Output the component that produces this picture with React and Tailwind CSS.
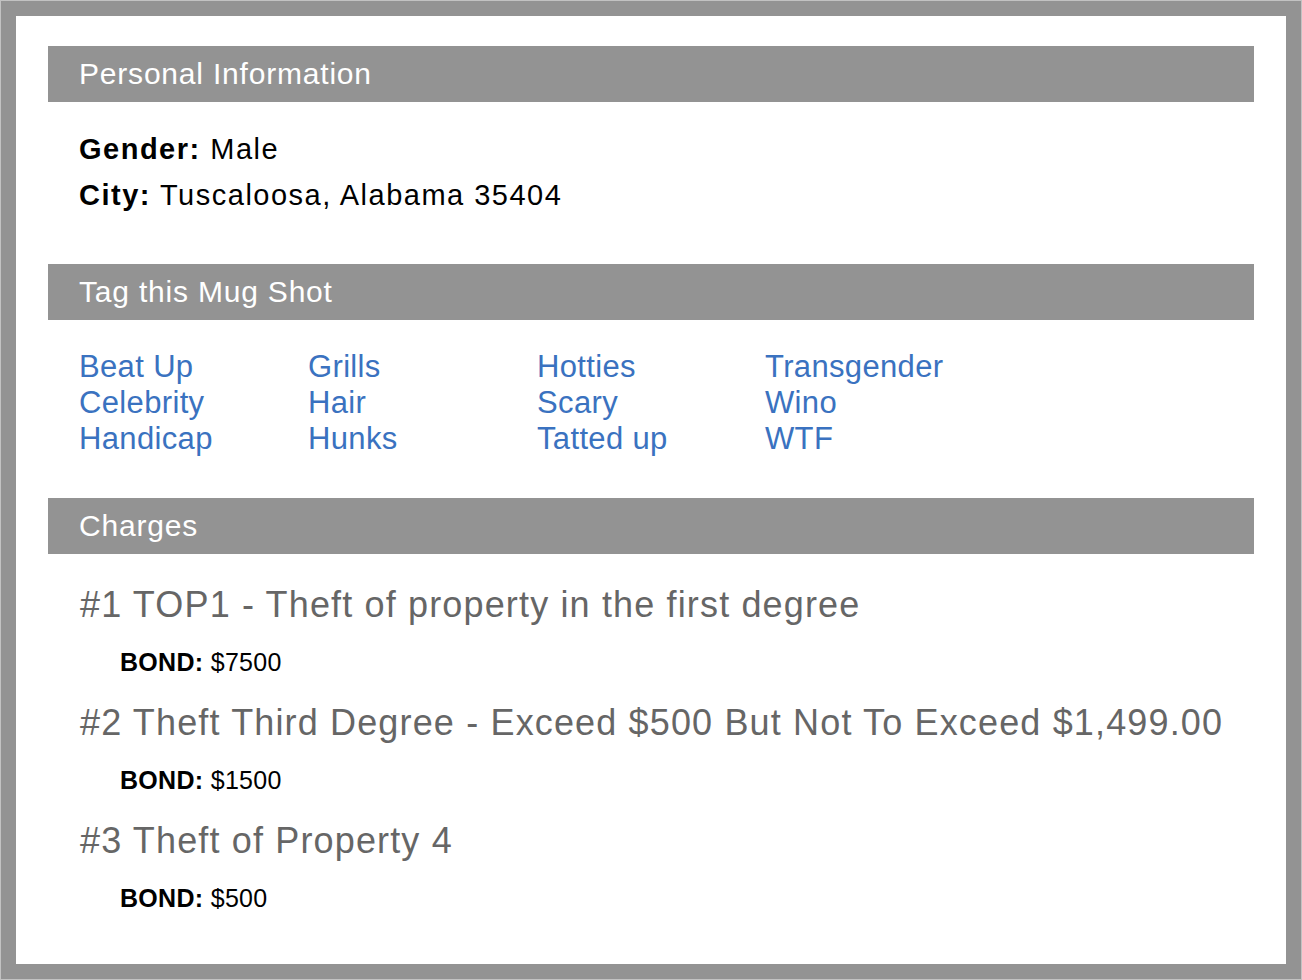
import React from "react";

const tags = [
  "Beat Up", "Celebrity", "Handicap",
  "Grills", "Hair", "Hunks",
  "Hotties", "Scary", "Tatted up",
  "Transgender", "Wino", "WTF",
];

const charges = [
  { title: "#1 TOP1 - Theft of property in the first degree", bond: "$7500" },
  { title: "#2 Theft Third Degree - Exceed $500 But Not To Exceed $1,499.00", bond: "$1500" },
  { title: "#3 Theft of Property 4", bond: "$500" },
];

function Header({ children }) {
  return (
    <div className="h-[56px] bg-[#939393] flex items-center pl-[31px] text-white text-[30px] tracking-[0.8px] leading-none">
      {children}
    </div>
  );
}

export default function App() {
  return (
    <div
      className="w-[1302px] h-[980px] border border-[#c2c2c2] bg-white"
      style={{ fontFamily: '"Liberation Sans", Arial, sans-serif' }}
    >
      <div className="h-full border-[15px] border-[#939393] bg-white pt-[30px] px-[32px]">
        <Header>Personal Information</Header>
        <div className="pl-[31px] mt-[24px] text-[29px] leading-[46px] tracking-[1.5px] text-black">
          <div>
            <span className="font-bold">Gender:</span> Male
          </div>
          <div>
            <span className="font-bold">City:</span> Tuscaloosa, Alabama 35404
          </div>
        </div>

        <div className="mt-[46px]">
          <Header>Tag this Mug Shot</Header>
        </div>
        <div className="pl-[31px] mt-[29px] grid grid-flow-col grid-rows-3 grid-cols-[229px_229px_228px_auto] text-[31px] leading-[36px] tracking-[0.35px] text-[#3a72c0]">
          {tags.map((t) => (
            <a key={t} href="#" className="whitespace-nowrap">
              {t}
            </a>
          ))}
        </div>

        <div className="mt-[41px]">
          <Header>Charges</Header>
        </div>
        <div className="pl-8 mt-[31px]">
          {charges.map((c) => (
            <div key={c.title} className="h-[118px]">
              <div className="text-[36px] leading-[40px] tracking-[1.15px] text-[#666666] whitespace-nowrap">
                {c.title}
              </div>
              <div className="mt-[22px] pl-10 text-[25px] leading-[30px] tracking-[0.3px] text-black">
                <span className="font-bold">BOND:</span> {c.bond}
              </div>
            </div>
          ))}
        </div>
      </div>
    </div>
  );
}
